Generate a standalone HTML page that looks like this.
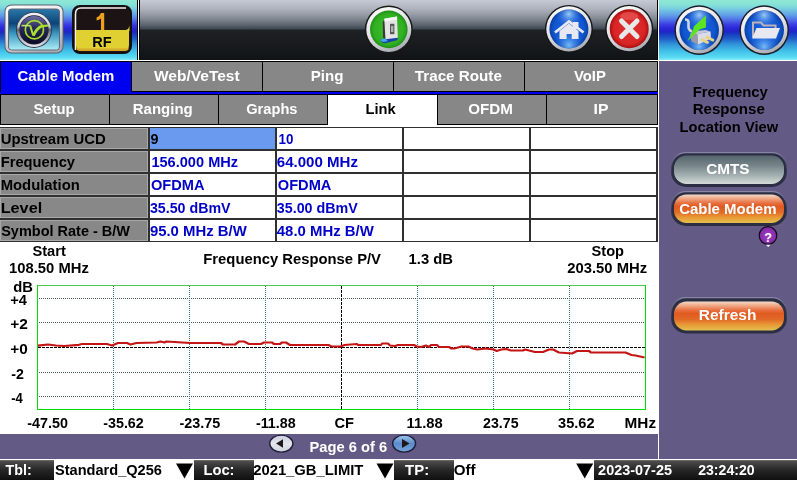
<!DOCTYPE html>
<html><head><meta charset="utf-8"><style>
html,body{margin:0;padding:0;width:797px;height:480px;overflow:hidden;background:#fff}
svg{display:block} body{position:relative}
text{font-family:"Liberation Sans", sans-serif;font-weight:bold}
</style></head><body>
<svg width="797" height="480" viewBox="0 0 797 480">

<defs>
 <linearGradient id="hcy" x1="0" y1="0" x2="0" y2="60" gradientUnits="userSpaceOnUse">
  <stop offset="0" stop-color="#8ee8d2"/><stop offset="0.08" stop-color="#86e2d8"/><stop offset="0.14" stop-color="#78d0e0"/>
  <stop offset="0.25" stop-color="#62a0e8"/><stop offset="0.33" stop-color="#5070e8"/><stop offset="0.41" stop-color="#3a3ce0"/>
  <stop offset="0.47" stop-color="#2828d8"/><stop offset="0.53" stop-color="#2024c8"/><stop offset="0.56" stop-color="#1838c0"/>
  <stop offset="0.65" stop-color="#2060c8"/><stop offset="0.73" stop-color="#3090d8"/><stop offset="0.85" stop-color="#40c0e8"/><stop offset="0.96" stop-color="#5cdcf4"/><stop offset="1" stop-color="#88ecf4"/>
 </linearGradient>
 <linearGradient id="hdk" x1="0" y1="0" x2="0" y2="60" gradientUnits="userSpaceOnUse">
  <stop offset="0" stop-color="#c6cad6"/><stop offset="0.15" stop-color="#aeb2bc"/><stop offset="0.3" stop-color="#868c96"/>
  <stop offset="0.42" stop-color="#5a626c"/><stop offset="0.485" stop-color="#3c4652"/><stop offset="0.5" stop-color="#1e2224"/>
  <stop offset="0.7" stop-color="#1a1c1e"/><stop offset="1" stop-color="#101416"/>
 </linearGradient>
 <linearGradient id="ring" x1="0.2" y1="0" x2="0.6" y2="1"><stop offset="0" stop-color="#fcfcfc"/><stop offset="0.55" stop-color="#e0e0e4"/><stop offset="1" stop-color="#a8acb4"/></linearGradient>
 <radialGradient id="bl" cx="0.5" cy="0.5" r="0.5"><stop offset="0" stop-color="#1a62dc"/><stop offset="0.78" stop-color="#1056d0"/><stop offset="1" stop-color="#0a40a4"/></radialGradient>
 <radialGradient id="blh" cx="0.5" cy="0.12" r="0.35"><stop offset="0" stop-color="#a8d8ff" stop-opacity="0.9"/><stop offset="1" stop-color="#3070e0" stop-opacity="0"/></radialGradient>
 <radialGradient id="blb" cx="0.5" cy="0.92" r="0.4"><stop offset="0" stop-color="#80c8ff" stop-opacity="0.9"/><stop offset="1" stop-color="#3070e0" stop-opacity="0"/></radialGradient>
 <radialGradient id="rd" cx="0.5" cy="0.5" r="0.5"><stop offset="0" stop-color="#e03030"/><stop offset="0.8" stop-color="#d82424"/><stop offset="1" stop-color="#a81010"/></radialGradient>
 <radialGradient id="gr" cx="0.5" cy="0.5" r="0.5"><stop offset="0" stop-color="#40c030"/><stop offset="0.8" stop-color="#30b020"/><stop offset="1" stop-color="#209018"/></radialGradient>
 <linearGradient id="lgp" x1="0" y1="0" x2="0" y2="1"><stop offset="0" stop-color="#2a78a8"/><stop offset="0.35" stop-color="#0c4478"/><stop offset="0.6" stop-color="#3a98c0"/><stop offset="1" stop-color="#b0eef6"/></linearGradient>
 <linearGradient id="lgd" x1="0" y1="0" x2="0" y2="1"><stop offset="0" stop-color="#7070a8"/><stop offset="0.4" stop-color="#2c2c5c"/><stop offset="1" stop-color="#0a0a24"/></linearGradient>
 <linearGradient id="chr" x1="0" y1="0" x2="0" y2="1"><stop offset="0" stop-color="#f4f4fa"/><stop offset="0.4" stop-color="#c8ccd4"/><stop offset="0.5" stop-color="#5a6272"/><stop offset="0.6" stop-color="#8a909c"/><stop offset="1" stop-color="#e4e6ee"/></linearGradient>
 <linearGradient id="stdk" x1="0" y1="0" x2="0" y2="1"><stop offset="0" stop-color="#747474"/><stop offset="0.08" stop-color="#4a4a4a"/><stop offset="0.5" stop-color="#262626"/><stop offset="1" stop-color="#101010"/></linearGradient>
 <linearGradient id="cmts" x1="0" y1="0" x2="0" y2="1"><stop offset="0" stop-color="#56646c"/><stop offset="0.35" stop-color="#76848a"/><stop offset="0.7" stop-color="#a4b0b0"/><stop offset="1" stop-color="#d4dcd8"/></linearGradient>
 <linearGradient id="orng" x1="0" y1="0" x2="0" y2="1"><stop offset="0" stop-color="#f2dcc8"/><stop offset="0.12" stop-color="#f0b090"/><stop offset="0.3" stop-color="#e87040"/><stop offset="0.42" stop-color="#e05a20"/><stop offset="0.62" stop-color="#e26a28"/><stop offset="0.8" stop-color="#e89a34"/><stop offset="1" stop-color="#e4c050"/></linearGradient>
 <linearGradient id="pillsh" x1="0" y1="0" x2="0" y2="1"><stop offset="0" stop-color="#8a88a8"/><stop offset="0.5" stop-color="#3a3c54"/><stop offset="1" stop-color="#2a2c40"/></linearGradient>
 <linearGradient id="navl" x1="0" y1="0" x2="0" y2="1"><stop offset="0" stop-color="#c8ccdc"/><stop offset="0.5" stop-color="#e4e6ee"/><stop offset="1" stop-color="#d0d4e0"/></linearGradient>
 <linearGradient id="navr" x1="0" y1="0" x2="0" y2="1"><stop offset="0" stop-color="#a0c8ec"/><stop offset="0.5" stop-color="#5a8ccc"/><stop offset="1" stop-color="#78a8dc"/></linearGradient>
 <radialGradient id="qm" cx="0.5" cy="0.5" r="0.5"><stop offset="0" stop-color="#a040c0"/><stop offset="1" stop-color="#8028a8"/></radialGradient>
</defs>
<rect x="0" y="0" width="797" height="480" fill="#fff" />
<rect x="0" y="0" width="137" height="60" fill="url(#hcy)" />
<rect x="140" y="0" width="517" height="60" fill="url(#hdk)" />
<rect x="659" y="0" width="138" height="60" fill="url(#hcy)" />
<rect x="137" y="0" width="1" height="60" fill="#000" />
<rect x="138" y="0" width="1" height="60" fill="#fff" />
<rect x="139" y="0" width="1" height="60" fill="#000" />
<rect x="657" y="0" width="1" height="60" fill="#000" />
<rect x="658" y="0" width="1" height="60" fill="#fff" />
<rect x="0" y="60" width="797" height="1" fill="#fff" />
<rect x="659" y="61" width="138" height="398" fill="#645a86" />
<rect x="658" y="61" width="1" height="398" fill="#fff" />
<rect x="0" y="61" width="131" height="33" fill="#0000f0" />
<rect x="0" y="61" width="131" height="1" fill="#000010" />
<rect x="0" y="61" width="1" height="31" fill="#000010" />
<rect x="131" y="61" width="132" height="31" fill="#000" />
<rect x="132" y="62" width="130" height="29" fill="#878787" />
<rect x="262" y="61" width="132" height="31" fill="#000" />
<rect x="263" y="62" width="130" height="29" fill="#878787" />
<rect x="393" y="61" width="132" height="31" fill="#000" />
<rect x="394" y="62" width="130" height="29" fill="#878787" />
<rect x="524" y="61" width="134" height="31" fill="#000" />
<rect x="525" y="62" width="132" height="29" fill="#878787" />
<rect x="131" y="92" width="527" height="2" fill="#0000f0" />
<rect x="0" y="94" width="658" height="1" fill="#000010" />
<rect x="0" y="95" width="110" height="30" fill="#000" />
<rect x="1" y="95" width="108" height="29" fill="#878787" />
<rect x="109" y="95" width="110" height="30" fill="#000" />
<rect x="110" y="95" width="108" height="29" fill="#878787" />
<rect x="218" y="95" width="110" height="30" fill="#000" />
<rect x="219" y="95" width="108" height="29" fill="#878787" />
<rect x="328" y="95" width="109" height="32" fill="#fff" />
<rect x="437" y="95" width="110" height="30" fill="#000" />
<rect x="438" y="95" width="108" height="29" fill="#878787" />
<rect x="546" y="95" width="112" height="30" fill="#000" />
<rect x="547" y="95" width="110" height="29" fill="#878787" />
<rect x="0" y="125" width="658" height="2" fill="#fff" />
<rect x="328" y="95" width="109" height="32" fill="#fff" />
<rect x="0" y="127" width="658" height="115" fill="#303030" />
<rect x="0" y="128" width="148" height="21" fill="#a8a8a8" />
<rect x="1" y="129" width="146" height="19" fill="#888888" />
<rect x="150" y="128" width="125" height="21" fill="#6a9af0" />
<rect x="277" y="128" width="125" height="21" fill="#fff" />
<rect x="404" y="128" width="125" height="21" fill="#fff" />
<rect x="531" y="128" width="125" height="21" fill="#fff" />
<rect x="0" y="151" width="148" height="21" fill="#a8a8a8" />
<rect x="1" y="152" width="146" height="19" fill="#888888" />
<rect x="150" y="151" width="125" height="21" fill="#fff" />
<rect x="277" y="151" width="125" height="21" fill="#fff" />
<rect x="404" y="151" width="125" height="21" fill="#fff" />
<rect x="531" y="151" width="125" height="21" fill="#fff" />
<rect x="0" y="174" width="148" height="21" fill="#a8a8a8" />
<rect x="1" y="175" width="146" height="19" fill="#888888" />
<rect x="150" y="174" width="125" height="21" fill="#fff" />
<rect x="277" y="174" width="125" height="21" fill="#fff" />
<rect x="404" y="174" width="125" height="21" fill="#fff" />
<rect x="531" y="174" width="125" height="21" fill="#fff" />
<rect x="0" y="197" width="148" height="21" fill="#a8a8a8" />
<rect x="1" y="198" width="146" height="19" fill="#888888" />
<rect x="150" y="197" width="125" height="21" fill="#fff" />
<rect x="277" y="197" width="125" height="21" fill="#fff" />
<rect x="404" y="197" width="125" height="21" fill="#fff" />
<rect x="531" y="197" width="125" height="21" fill="#fff" />
<rect x="0" y="220" width="148" height="21" fill="#a8a8a8" />
<rect x="1" y="221" width="146" height="19" fill="#888888" />
<rect x="150" y="220" width="125" height="21" fill="#fff" />
<rect x="277" y="220" width="125" height="21" fill="#fff" />
<rect x="404" y="220" width="125" height="21" fill="#fff" />
<rect x="531" y="220" width="125" height="21" fill="#fff" />
<g stroke="#4a5a5a" stroke-width="1" stroke-dasharray="1 1" shape-rendering="crispEdges">
<line x1="39" y1="298.5" x2="645" y2="298.5"/>
<line x1="39" y1="322.5" x2="645" y2="322.5"/>
<line x1="39" y1="372.5" x2="645" y2="372.5"/>
<line x1="39" y1="396.5" x2="645" y2="396.5"/>
</g>
<g stroke="#3a7a7a" stroke-width="1" stroke-dasharray="1 1" shape-rendering="crispEdges">
<line x1="113.5" y1="286" x2="113.5" y2="409"/>
<line x1="189.5" y1="286" x2="189.5" y2="409"/>
<line x1="265.5" y1="286" x2="265.5" y2="409"/>
<line x1="417.5" y1="286" x2="417.5" y2="409"/>
<line x1="493.5" y1="286" x2="493.5" y2="409"/>
<line x1="569.5" y1="286" x2="569.5" y2="409"/>
</g>
<g stroke="#000" stroke-width="1" stroke-dasharray="3 1" shape-rendering="crispEdges">
<line x1="38" y1="347.5" x2="645" y2="347.5"/>
<line x1="341.5" y1="286" x2="341.5" y2="409"/>
</g>
<rect x="37" y="285" width="609" height="1" fill="#50c850" />
<rect x="37" y="285" width="1" height="125" fill="#00e000" />
<rect x="645" y="285" width="1" height="125" fill="#00e000" />
<rect x="37" y="409" width="609" height="1" fill="#00e000" />
<polyline fill="none" stroke="#c41414" stroke-width="2.2" stroke-linejoin="round" points="38,345.7 48,344.5 56,345.5 64,346 79,344.8 82,344 107,344 112,345.5 118,343 127,343 130.4,344.5 136.4,343 156.5,342.5 160.5,341.5 164.5,342.5 166.5,341.5 190,343 221,343 223,344.5 235,344.5 239,341.5 244,341.5 249,344 261,344 264,342.5 272,342.5 274,344 280,344 282,342.5 286,342.5 290,345 328.5,345 331.6,346.5 340.6,346.5 344.6,345 357,344 358,345 381,345 382,343.5 388,343.5 390,345.5 395,346 398,345 414,345 417,346.5 421,347 426,345.5 429,347 431,345 437,345 439,347 449,347 451.4,348.5 454.4,348.5 461.5,346.5 468.5,346.5 472.5,348.5 477.5,349.5 485.6,348.5 493.6,349.5 496.6,351 501.6,349.5 506,349 511,350.5 523,350.5 525,349.5 529,350.5 535,352 543,352 549,349.5 553,349.5 559,352.5 572,353.5 577,351 589,351 591,352.5 625.5,352.5 631.5,355 635.5,355.5 644.6,357.5"/>
<rect x="0" y="434" width="658" height="25" fill="#645a86" />
<rect x="658" y="434" width="1" height="25" fill="#fff" />
<ellipse cx="281.3" cy="443.6" rx="11.6" ry="8.5" fill="url(#navl)" stroke="#20203a" stroke-width="1.4"/>
<path d="M276 443.5 L283 439.2 L283 447.8 Z" fill="#201818"/>
<ellipse cx="404.1" cy="443.6" rx="11.5" ry="8.5" fill="url(#navr)" stroke="#20203a" stroke-width="1.4"/>
<path d="M409.5 443.5 L402 439 L402 448 Z" fill="#201818"/>
<rect x="0" y="459" width="797" height="21" fill="#fff" />
<rect x="0" y="460" width="54" height="20" fill="url(#stdk)" />
<rect x="194" y="460" width="60" height="20" fill="url(#stdk)" />
<rect x="394" y="460" width="60" height="20" fill="url(#stdk)" />
<rect x="594" y="460" width="203" height="20" fill="url(#stdk)" />
<path d="M176 463.5 H193 L184.5 478.5 Z" fill="#000"/>
<path d="M376.5 463.5 H393.5 L385.0 478.5 Z" fill="#000"/>
<path d="M576.2 463.5 H593.2 L584.7 478.5 Z" fill="#000"/>
<rect x="671" y="152" width="116" height="35" rx="15" fill="url(#pillsh)"/>
<rect x="672" y="153.2" width="114" height="33" rx="14" fill="#2c2e44"/>
<rect x="674" y="155.5" width="110" height="28.5" rx="12.5" fill="url(#cmts)"/>
<rect x="671" y="191" width="116" height="35" rx="15" fill="url(#pillsh)"/>
<rect x="672" y="192.2" width="114" height="33" rx="14" fill="#2c2e44"/>
<rect x="674" y="194.5" width="110" height="28.5" rx="12.5" fill="url(#orng)"/>
<rect x="671" y="297" width="116" height="36.5" rx="15" fill="url(#pillsh)"/>
<rect x="672" y="298.2" width="114" height="34.5" rx="14" fill="#2c2e44"/>
<rect x="674" y="301.5" width="110" height="29.0" rx="12.5" fill="url(#orng)"/>
<circle cx="768" cy="235.5" r="8.8" fill="url(#qm)" stroke="#100818" stroke-width="1.2"/>
<text x="768" y="241.5" text-anchor="middle" font-size="12.5" fill="#fff">?</text>
<path d="M766 244.8 H770.5 L768.2 247 Z" fill="#fff"/>
 <!-- logo -->
 <rect x="4.5" y="4.5" width="59" height="49" rx="7" fill="#5a6068"/>
 <rect x="5.5" y="5.5" width="57" height="47" rx="6" fill="url(#ring)"/>
 <rect x="8.5" y="9" width="51" height="41" rx="3" fill="url(#lgp)" stroke="#606878" stroke-width="1"/>
 <circle cx="34" cy="29.9" r="18" fill="#30384a"/>
 <circle cx="34" cy="29.9" r="17.1" fill="url(#chr)"/>
 <circle cx="34" cy="29.9" r="14.6" fill="#202030"/>
 <circle cx="34" cy="29.9" r="14" fill="url(#lgd)"/>
 <circle cx="34.4" cy="29.8" r="9.1" fill="none" stroke="#a4dc30" stroke-width="1.7"/>
 <path d="M21.5 25.6 H30.3" stroke="#c0e070" stroke-width="1.6"/>
 <path d="M30.2 25.5 L33 35" stroke="#a8e030" stroke-width="2"/>
 <path d="M32 35.6 Q35 27.5 41 25 L48.6 24.4 L48.6 26.6 L42.3 27.2 Q37.5 29.5 34.6 36.2 Z" fill="#a8e030"/>
 <!-- RF badge -->
 <rect x="73" y="6" width="58" height="47" rx="7" fill="#1c1414" stroke="#141010" stroke-width="2"/>
 <path d="M75.5 50 V14 Q75.5 8 81 8 H126" fill="none" stroke="#f4f0f0" stroke-width="1.5"/>
 <path d="M76 30 H129 V45 Q129 51 123 51 H82 Q76 51 76 45 Z" fill="#e0d032"/>
 <path d="M76 48.5 H129 Q128.5 51 123 51 H82 Q76.5 51 76 48.5 Z" fill="#d8a82a"/>
 <path d="M76 30 H125 Q129 30 129.5 25 V31 H76Z" fill="#e0d032"/>
 <path d="M101 13 H104.2 V30 H101 V18.5 Q99 20 96.6 20.5 V17.5 Q100 16 101 13Z" fill="#f0a020"/>
 <!-- green -->
 <circle cx="388.8" cy="29.4" r="24" fill="#181818"/>
 <circle cx="388.8" cy="29.4" r="22.5" fill="url(#ring)"/>
 <circle cx="388.8" cy="29.4" r="18.8" fill="url(#gr)"/>
 <path d="M380.5 39.5 Q381 43.5 385 43.3 L396 40.5 Q398.5 39.5 397.8 37.5 L384 38.5 Z" fill="#1840a8"/>
 <path d="M380.5 39.5 Q381 42 384 42 L388 41 L385 38.5 Z" fill="#40a8f0"/>
 <path d="M382.7 22 L385 19 L386 39 L383 37.5 Z" fill="#383838"/>
 <path d="M384.3 18.7 L397 16.5 L397.8 37.7 L385.5 39.3 Z" fill="#e4e4e4"/>
 <path d="M384.3 18.7 L397 16.5 L397.2 19.5 L384.6 21.5 Z" fill="#f8f8f8"/>
 <rect x="390" y="23.8" width="4.4" height="10.4" fill="#585858"/>
 <rect x="391" y="26" width="2.4" height="6" fill="#b0b0b0"/>
 <!-- home -->
 <circle cx="568.9" cy="28.9" r="24" fill="#141618"/>
 <circle cx="568.9" cy="28.9" r="22.6" fill="url(#ring)"/>
 <circle cx="568.9" cy="28.9" r="19.5" fill="url(#bl)"/>
 <circle cx="568.9" cy="28.9" r="19.5" fill="url(#blh)"/>
 <circle cx="568.9" cy="28.9" r="19.5" fill="url(#blb)"/>
 <path d="M555 32.5 L569 21.5 L583.5 32.5" fill="none" stroke="#e8e8f0" stroke-width="2.8" stroke-linejoin="miter"/>
 <path d="M559.5 31 L569 23.5 L578.5 31 V39 H571.7 V34 H566.6 V39 H559.5 Z" fill="#e8e8f0"/>
 <rect x="573" y="22" width="5.5" height="7" fill="#e8e8f0"/>
 <!-- close -->
 <circle cx="629.2" cy="28.7" r="24" fill="#141618"/>
 <circle cx="629.2" cy="28.7" r="22.6" fill="url(#ring)"/>
 <circle cx="629.2" cy="28.7" r="19.5" fill="url(#rd)"/>
 <ellipse cx="629.2" cy="16" rx="9" ry="4" fill="#f07070" opacity="0.45"/>
 <path d="M621.5 21 L637 36.5 M637 21 L621.5 36.5" stroke="#e8e8e8" stroke-width="5" stroke-linecap="round"/>
 <!-- plug -->
 <circle cx="699.2" cy="30.1" r="24.8" fill="#1a1c28"/>
 <circle cx="699.2" cy="30.1" r="23.3" fill="url(#ring)"/>
 <circle cx="699.2" cy="30.1" r="19.8" fill="url(#bl)"/>
 <circle cx="699.2" cy="30.1" r="19.8" fill="url(#blh)"/>
 <circle cx="699.2" cy="30.1" r="19.8" fill="url(#blb)"/>
 <path d="M685 19.5 Q688.5 19.5 688.5 22 V27 Q688.5 30 692 31.5" fill="none" stroke="#d4d4dc" stroke-width="2.6"/>
 <path d="M690 34 L694 31.2 L705.5 30 L710.5 31.5 L697.4 34 Z" fill="#c8c8d4"/>
 <path d="M690 34 L697.4 34 L698.2 44.5 L691.5 41.5 Z" fill="#9a9aa8"/>
 <path d="M697.4 34 L710.5 31.5 L711 38.5 L698.2 44.5 Z" fill="#dcdce4"/>
 <path d="M707.2 37.4 L712.8 40 M702 39.6 L707.4 42.3" stroke="#e8d488" stroke-width="3" stroke-linecap="round"/>
 <path d="M705.8 15.5 L706 27.6 L700 29.2 L687.5 41.2 L693 30 L693.8 26.4 Z" fill="#5ce420"/>
 <!-- folder -->
 <circle cx="764.2" cy="30.1" r="24.8" fill="#1a1c28"/>
 <circle cx="764.2" cy="30.1" r="23.3" fill="url(#ring)"/>
 <circle cx="764.2" cy="30.1" r="19.8" fill="url(#bl)"/>
 <circle cx="764.2" cy="30.1" r="19.8" fill="url(#blh)"/>
 <circle cx="764.2" cy="30.1" r="19.8" fill="url(#blb)"/>
 <path d="M753 37 V22.5 H761 L763.5 25.5 H775.5 V31" fill="none" stroke="#c0b0b8" stroke-width="2"/>
 <path d="M756.5 28 H780 L776 38.5 H752 Z" fill="#e8e8f0"/>

</svg>
<svg width="797" height="480" viewBox="0 0 797 480" style="position:absolute;left:0;top:0;will-change:transform">
<text x="17.40" y="81" font-size="15.5" fill="#fff" textLength="96.80" lengthAdjust="spacingAndGlyphs">Cable Modem</text>
<text x="153.90" y="81" font-size="15.5" fill="#fff" textLength="85.80" lengthAdjust="spacingAndGlyphs">Web/VeTest</text>
<text x="310.70" y="81" font-size="15.5" fill="#fff" textLength="32.70" lengthAdjust="spacingAndGlyphs">Ping</text>
<text x="414.80" y="81" font-size="15.5" fill="#fff" textLength="87.10" lengthAdjust="spacingAndGlyphs">Trace Route</text>
<text x="573.90" y="81" font-size="15.5" fill="#fff" textLength="31.90" lengthAdjust="spacingAndGlyphs">VoIP</text>
<text x="33.40" y="114" font-size="15.5" fill="#fff" textLength="41.20" lengthAdjust="spacingAndGlyphs">Setup</text>
<text x="132.80" y="114" font-size="15.5" fill="#fff" textLength="59.90" lengthAdjust="spacingAndGlyphs">Ranging</text>
<text x="246.20" y="114" font-size="15.5" fill="#fff" textLength="51.30" lengthAdjust="spacingAndGlyphs">Graphs</text>
<text x="365.50" y="114" font-size="15.5" fill="#000" textLength="30.20" lengthAdjust="spacingAndGlyphs">Link</text>
<text x="468.20" y="114" font-size="15.5" fill="#fff" textLength="44.60" lengthAdjust="spacingAndGlyphs">OFDM</text>
<text x="593.50" y="114" font-size="15.5" fill="#fff" textLength="14.90" lengthAdjust="spacingAndGlyphs">IP</text>
<text x="0.70" y="144" font-size="15.5" fill="#000" textLength="105.10" lengthAdjust="spacingAndGlyphs">Upstream UCD</text>
<text x="0.70" y="167" font-size="15.5" fill="#000" textLength="74.30" lengthAdjust="spacingAndGlyphs">Frequency</text>
<text x="0.70" y="190" font-size="15.5" fill="#000" textLength="79.10" lengthAdjust="spacingAndGlyphs">Modulation</text>
<text x="0.70" y="213" font-size="15.5" fill="#000" textLength="41.50" lengthAdjust="spacingAndGlyphs">Level</text>
<text x="1.20" y="236" font-size="15.5" fill="#000" textLength="128.80" lengthAdjust="spacingAndGlyphs">Symbol Rate - B/W</text>
<text x="150.60" y="144" font-size="15.5" fill="#000" textLength="8.00" lengthAdjust="spacingAndGlyphs">9</text>
<text x="151.40" y="167" font-size="15.5" fill="#0000c8" textLength="86.70" lengthAdjust="spacingAndGlyphs">156.000 MHz</text>
<text x="150.90" y="190" font-size="15.5" fill="#0000c8" textLength="53.60" lengthAdjust="spacingAndGlyphs">OFDMA</text>
<text x="149.90" y="213" font-size="15.5" fill="#0000c8" textLength="80.70" lengthAdjust="spacingAndGlyphs">35.50 dBmV</text>
<text x="149.90" y="236" font-size="15.5" fill="#0000c8" textLength="96.90" lengthAdjust="spacingAndGlyphs">95.0 MHz B/W</text>
<text x="278.50" y="144" font-size="15.5" fill="#0000c8" textLength="14.90" lengthAdjust="spacingAndGlyphs">10</text>
<text x="276.80" y="167" font-size="15.5" fill="#0000c8" textLength="81.20" lengthAdjust="spacingAndGlyphs">64.000 MHz</text>
<text x="277.80" y="190" font-size="15.5" fill="#0000c8" textLength="53.60" lengthAdjust="spacingAndGlyphs">OFDMA</text>
<text x="276.80" y="213" font-size="15.5" fill="#0000c8" textLength="81.00" lengthAdjust="spacingAndGlyphs">35.00 dBmV</text>
<text x="276.80" y="236" font-size="15.5" fill="#0000c8" textLength="97.00" lengthAdjust="spacingAndGlyphs">48.0 MHz B/W</text>
<text x="32.40" y="256" font-size="15.5" fill="#000" textLength="33.50" lengthAdjust="spacingAndGlyphs">Start</text>
<text x="9.10" y="273" font-size="15.5" fill="#000" textLength="79.70" lengthAdjust="spacingAndGlyphs">108.50 MHz</text>
<text x="203.30" y="264" font-size="15.5" fill="#000" textLength="177.70" lengthAdjust="spacingAndGlyphs">Frequency Response P/V</text>
<text x="408.60" y="264" font-size="15.5" fill="#000" textLength="44.40" lengthAdjust="spacingAndGlyphs">1.3 dB</text>
<text x="591.50" y="256" font-size="15.5" fill="#000" textLength="32.50" lengthAdjust="spacingAndGlyphs">Stop</text>
<text x="567.20" y="273" font-size="15.5" fill="#000" textLength="79.90" lengthAdjust="spacingAndGlyphs">203.50 MHz</text>
<text x="13.20" y="292" font-size="15.5" fill="#000" textLength="19.70" lengthAdjust="spacingAndGlyphs">dB</text>
<text x="10.20" y="305" font-size="15.5" fill="#000" textLength="16.70" lengthAdjust="spacingAndGlyphs">+4</text>
<text x="10.20" y="329" font-size="15.5" fill="#000" textLength="17.60" lengthAdjust="spacingAndGlyphs">+2</text>
<text x="10.30" y="354" font-size="15.5" fill="#000" textLength="17.50" lengthAdjust="spacingAndGlyphs">+0</text>
<text x="11.20" y="379" font-size="15.5" fill="#000" textLength="12.60" lengthAdjust="spacingAndGlyphs">-2</text>
<text x="11.20" y="403" font-size="15.5" fill="#000" textLength="11.60" lengthAdjust="spacingAndGlyphs">-4</text>
<text x="27.20" y="428" font-size="15.5" fill="#000" textLength="40.70" lengthAdjust="spacingAndGlyphs">-47.50</text>
<text x="103.20" y="428" font-size="15.5" fill="#000" textLength="40.60" lengthAdjust="spacingAndGlyphs">-35.62</text>
<text x="179.60" y="428" font-size="15.5" fill="#000" textLength="40.70" lengthAdjust="spacingAndGlyphs">-23.75</text>
<text x="255.90" y="428" font-size="15.5" fill="#000" textLength="39.70" lengthAdjust="spacingAndGlyphs">-11.88</text>
<text x="334.40" y="428" font-size="15.5" fill="#000" textLength="19.50" lengthAdjust="spacingAndGlyphs">CF</text>
<text x="406.60" y="428" font-size="15.5" fill="#000" textLength="36.20" lengthAdjust="spacingAndGlyphs">11.88</text>
<text x="483.10" y="428" font-size="15.5" fill="#000" textLength="35.50" lengthAdjust="spacingAndGlyphs">23.75</text>
<text x="558.10" y="428" font-size="15.5" fill="#000" textLength="36.40" lengthAdjust="spacingAndGlyphs">35.62</text>
<text x="624.60" y="428" font-size="15.5" fill="#000" textLength="31.50" lengthAdjust="spacingAndGlyphs">MHz</text>
<text x="309.50" y="452" font-size="15.5" fill="#fff" textLength="77.70" lengthAdjust="spacingAndGlyphs">Page 6 of 6</text>
<text x="5.60" y="475" font-size="15.5" fill="#fff" textLength="26.10" lengthAdjust="spacingAndGlyphs">Tbl:</text>
<text x="55.00" y="475" font-size="15.5" fill="#000" textLength="106.90" lengthAdjust="spacingAndGlyphs">Standard_Q256</text>
<text x="203.40" y="475" font-size="15.5" fill="#fff" textLength="31.10" lengthAdjust="spacingAndGlyphs">Loc:</text>
<text x="253.20" y="475" font-size="15.5" fill="#000" textLength="110.20" lengthAdjust="spacingAndGlyphs">2021_GB_LIMIT</text>
<text x="405.10" y="475" font-size="15.5" fill="#fff" textLength="24.00" lengthAdjust="spacingAndGlyphs">TP:</text>
<text x="453.70" y="475" font-size="15.5" fill="#000" textLength="21.80" lengthAdjust="spacingAndGlyphs">Off</text>
<text x="598.10" y="475" font-size="15.5" fill="#fff" textLength="73.90" lengthAdjust="spacingAndGlyphs">2023-07-25</text>
<text x="698.20" y="475" font-size="15.5" fill="#fff" textLength="56.40" lengthAdjust="spacingAndGlyphs">23:24:20</text>
<text x="692.70" y="97" font-size="15.5" fill="#000" textLength="75.20" lengthAdjust="spacingAndGlyphs">Frequency</text>
<text x="692.70" y="114" font-size="15.5" fill="#000" textLength="72.10" lengthAdjust="spacingAndGlyphs">Response</text>
<text x="679.60" y="132" font-size="15.5" fill="#000" textLength="98.50" lengthAdjust="spacingAndGlyphs">Location View</text>
<text x="706.20" y="174" font-size="15.5" fill="#fff" textLength="43.40" lengthAdjust="spacingAndGlyphs">CMTS</text>
<text x="679.20" y="214" font-size="15.5" fill="#fff" textLength="97.30" lengthAdjust="spacingAndGlyphs">Cable Modem</text>
<text x="698.70" y="320" font-size="15.5" fill="#fff" textLength="57.80" lengthAdjust="spacingAndGlyphs">Refresh</text>
<text x="92.20" y="47" font-size="14.5" fill="#000" textLength="19.40" lengthAdjust="spacingAndGlyphs">RF</text>
</svg>
</body></html>
